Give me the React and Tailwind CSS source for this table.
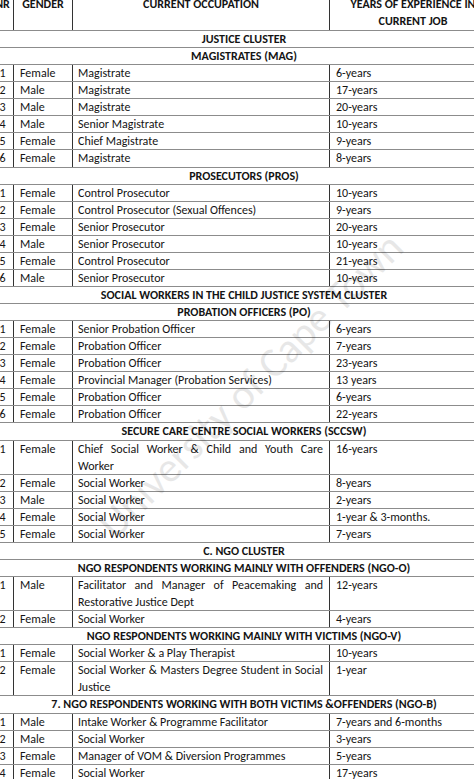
const rows = [
  { type: "cluster", text: "JUSTICE CLUSTER" },
  { type: "group", text: "MAGISTRATES (MAG)" },
  { n: 1, g: "Female", o: "Magistrate", y: "6-years" },
  { n: 2, g: "Male", o: "Magistrate", y: "17-years" },
  { n: 3, g: "Male", o: "Magistrate", y: "20-years" },
  { n: 4, g: "Male", o: "Senior Magistrate", y: "10-years" },
  { n: 5, g: "Female", o: "Chief Magistrate", y: "9-years" },
  { n: 6, g: "Female", o: "Magistrate", y: "8-years" },
  { type: "group", text: "PROSECUTORS (PROS)" },
  { n: 1, g: "Female", o: "Control Prosecutor", y: "10-years" },
  { n: 2, g: "Female", o: "Control Prosecutor (Sexual Offences)", y: "9-years" },
  { n: 3, g: "Female", o: "Senior Prosecutor", y: "20-years" },
  { n: 4, g: "Male", o: "Senior Prosecutor", y: "10-years" },
  { n: 5, g: "Female", o: "Control Prosecutor", y: "21-years" },
  { n: 6, g: "Male", o: "Senior Prosecutor", y: "10-years" },
  { type: "cluster", text: "SOCIAL WORKERS IN THE CHILD JUSTICE SYSTEM CLUSTER" },
  { type: "group", text: "PROBATION OFFICERS (PO)" },
  { n: 1, g: "Female", o: "Senior Probation Officer", y: "6-years" },
  { n: 2, g: "Female", o: "Probation Officer", y: "7-years" },
  { n: 3, g: "Female", o: "Probation Officer", y: "23-years" },
  { n: 4, g: "Female", o: "Provincial Manager (Probation Services)", y: "13 years" },
  { n: 5, g: "Female", o: "Probation Officer", y: "6-years" },
  { n: 6, g: "Female", o: "Probation Officer", y: "22-years" },
  { type: "group", text: "SECURE CARE CENTRE SOCIAL WORKERS (SCCSW)" },
  { n: 1, g: "Female", o: "Chief Social Worker & Child and Youth Care Worker", y: "16-years", tall: true },
  { n: 2, g: "Female", o: "Social Worker", y: "8-years" },
  { n: 3, g: "Male", o: "Social Worker", y: "2-years" },
  { n: 4, g: "Female", o: "Social Worker", y: "1-year & 3-months." },
  { n: 5, g: "Female", o: "Social Worker", y: "7-years" },
  { type: "cluster", text: "C. NGO CLUSTER" },
  { type: "group", text: "NGO RESPONDENTS WORKING MAINLY WITH OFFENDERS (NGO-O)" },
  { n: 1, g: "Male", o: "Facilitator and Manager of Peacemaking and Restorative Justice Dept", y: "12-years", tall: true },
  { n: 2, g: "Female", o: "Social Worker", y: "4-years" },
  { type: "group", text: "NGO RESPONDENTS WORKING MAINLY WITH VICTIMS (NGO-V)" },
  { n: 1, g: "Female", o: "Social Worker & a Play Therapist", y: "10-years" },
  { n: 2, g: "Female", o: "Social Worker & Masters Degree Student in Social Justice", y: "1-year", tall: true },
  { type: "group", text: "7. NGO RESPONDENTS WORKING WITH BOTH VICTIMS &OFFENDERS (NGO-B)" },
  { n: 1, g: "Male", o: "Intake Worker & Programme Facilitator", y: "7-years and 6-months" },
  { n: 2, g: "Male", o: "Social Worker", y: "3-years" },
  { n: 3, g: "Female", o: "Manager of VOM & Diversion Programmes", y: "5-years" },
  { n: 4, g: "Female", o: "Social Worker", y: "17-years" },
];

const Row = ({ r }) => {
  if (r.type) {
    return (
      <div className="flex h-[17.07px] items-center justify-center border-b border-[#8c8c8c] font-bold leading-[16px]">
        {r.text}
      </div>
    );
  }
  return (
    <div className={`flex border-b border-[#8c8c8c] leading-[17px] ${r.tall ? "h-[34.14px]" : "h-[17.07px]"}`}>
      <div className="w-[22px] shrink-0 border-r border-[#333] text-center">{r.n}</div>
      <div className="w-[59px] shrink-0 border-r border-[#333] pl-[6px]">{r.g}</div>
      <div className="w-[257px] shrink-0 border-r border-[#333] pl-[5px] pr-[6px] text-justify">
        {r.o}
      </div>
      <div className="w-[166px] shrink-0 pl-[6px]">{r.y}</div>
    </div>
  );
};

export default function App() {
  return (
    <div
      className="relative h-[779px] w-[474px] overflow-hidden bg-white text-[12px] text-[#141414]"
      style={{ fontFamily: "Carlito, Lato, 'Open Sans', sans-serif" }}
    >
      <div className="ml-[-8px] mt-[-4px] w-[504px]">
        <div className="flex h-[35px] border-b border-[#8c8c8c] font-bold leading-[17px]">
          <div className="w-[22px] shrink-0 border-r border-[#333] text-center">NR</div>
          <div className="w-[59px] shrink-0 border-r border-[#333] text-center">GENDER</div>
          <div className="w-[257px] shrink-0 border-r border-[#333] text-center">CURRENT OCCUPATION</div>
          <div className="w-[166px] shrink-0 text-center">
            YEARS OF EXPERIENCE IN
            <br />
            CURRENT JOB
          </div>
        </div>
        {rows.map((r, i) => (
          <Row key={i} r={r} />
        ))}
      </div>
      <div className="pointer-events-none absolute left-[250px] top-[385px] -translate-x-1/2 -translate-y-1/2 -rotate-[45deg] whitespace-nowrap text-[42px] text-[#000] opacity-[0.09]">
        University of Cape Town
      </div>
    </div>
  );
}
